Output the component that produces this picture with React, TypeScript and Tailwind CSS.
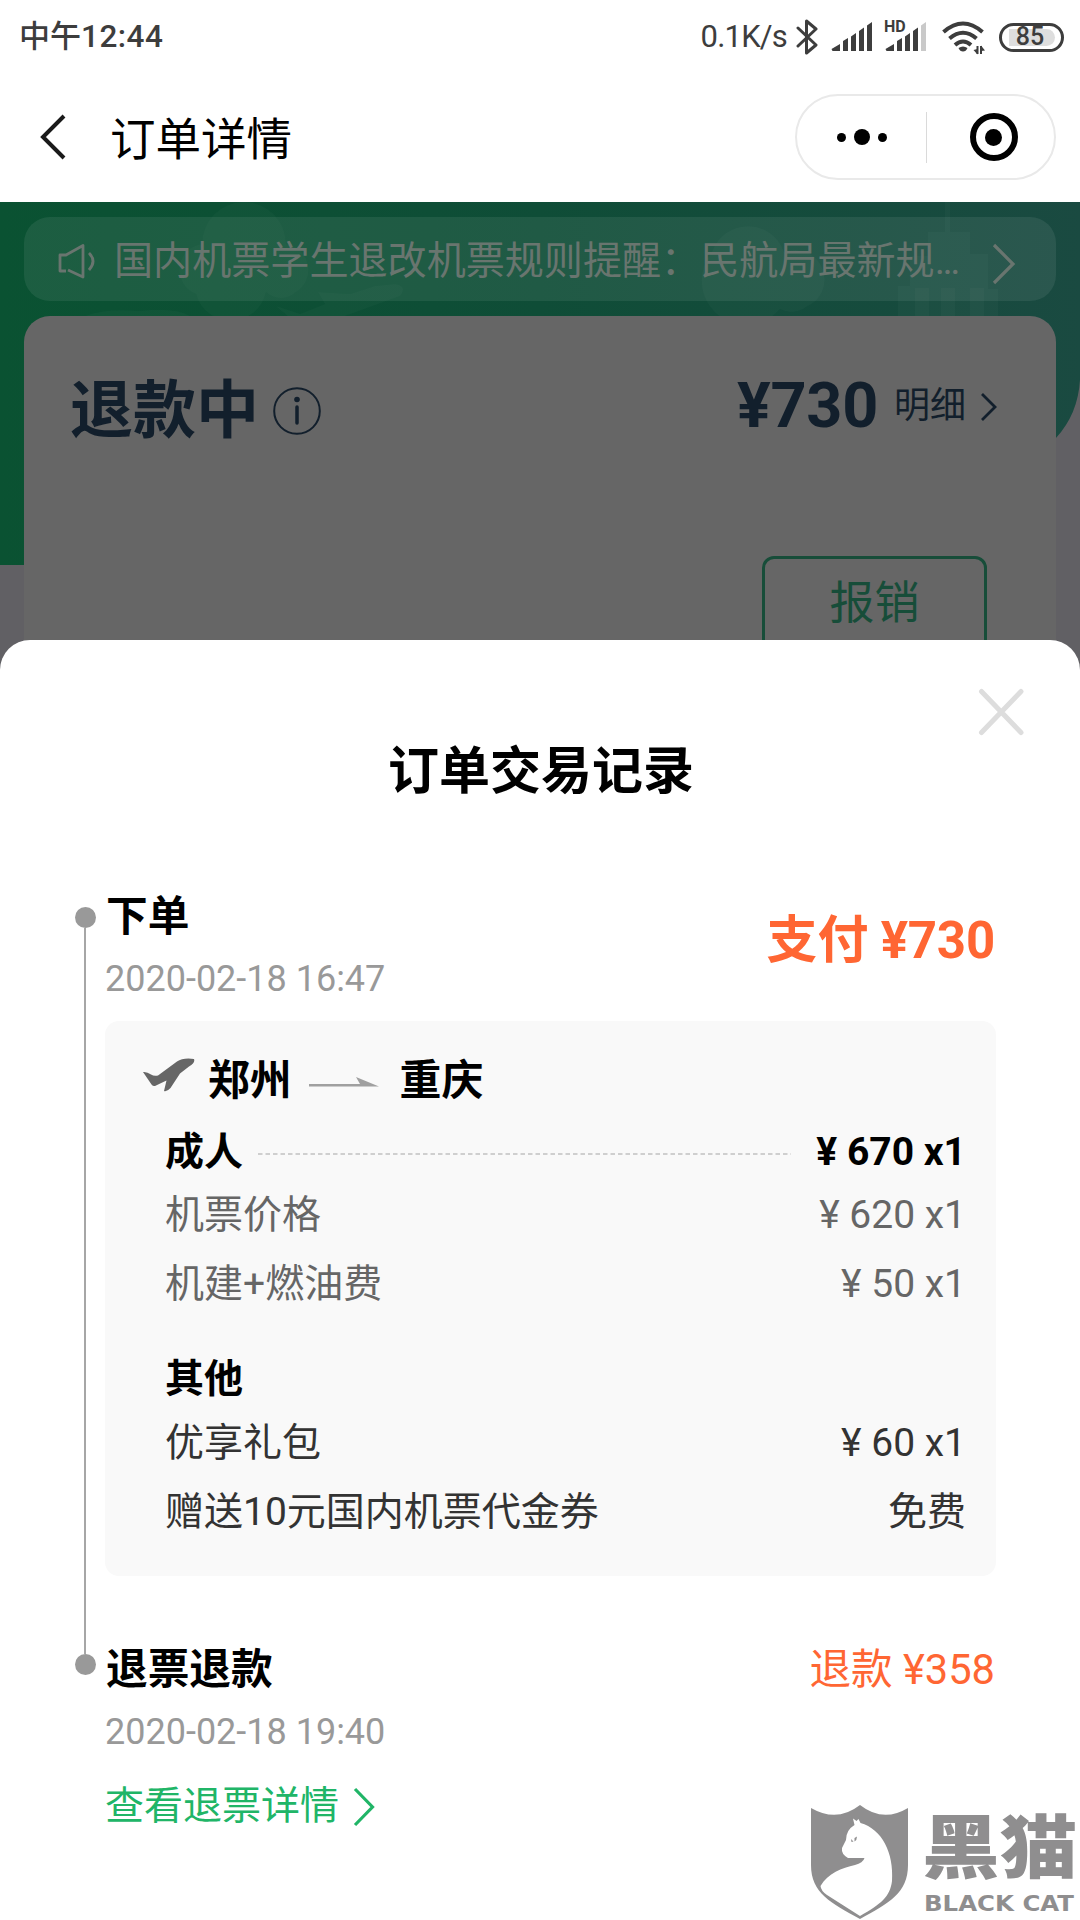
import React from "react";

const Bluetooth = () => (
  <svg width="22" height="36" viewBox="0 0 22 36" fill="none" stroke="#3d3d3d" strokeWidth="3" strokeLinejoin="round" strokeLinecap="round">
    <path d="M2 9 L20 26 L10.5 34 V2 L20 10 L2 27" />
  </svg>
);

const Signal = ({ weak = false }: { weak?: boolean }) => (
  <svg width="42" height="32" viewBox="0 0 42 32" fill="#3d3d3d">
    <path d="M0.500 28 L9 23 V30 H1.500Z M12 20 L17 17 V30 H12Z M20 15.500 L25 12 V30 H20Z M28 10 L33 6.500 V30 H28Z" />
    <path d="M36 4.500 L41 1 V30 H36Z" fill={weak ? "#c9c9c9" : "#3d3d3d"} />
  </svg>
);

const Wifi = () => (
  <svg width="44" height="34" viewBox="0 0 44 34" fill="none" stroke="#3d3d3d" strokeWidth="4">
    <path d="M1.500 11 Q21 -6 40.500 11 M7.500 17.500 Q21 6 34.500 17.500 M13 24 Q21 17 29 24" />
    <path d="M16.500 27 Q21 24 25.500 27 Q24 30.500 21 30.500 Q18 30.500 16.500 27Z" fill="#3d3d3d" stroke="none" />
    <path d="M35.500 25 V33 M39 25 V33" strokeWidth="2" />
    <path d="M31.500 29 L35.500 33.500 V28Z M43 29.500 L39 24.500 V30Z" fill="#3d3d3d" stroke="none" />
  </svg>
);

const StatusBar = () => (
  <div className="flex h-[74px] items-center pl-[19px] pr-[16px] text-[#3d3d3d]">
    <div className="flex flex-1 items-center font-medium">
      <span className="text-[31px]">中午</span>
      <span className="text-[31.500px] tracking-[0.500px]">12:44</span>
    </div>
    <span className="text-[31px] tracking-[-0.800px]">0.1K/s</span>
    <span className="ml-[9px]"><Bluetooth /></span>
    <span className="ml-[13px]"><Signal /></span>
    <span className="relative ml-[12px]">
      <Signal weak />
      <span className="absolute left-[-1px] top-[-4px] text-[16px] font-bold leading-5">HD</span>
    </span>
    <span className="ml-[15px] pt-0.5"><Wifi /></span>
    <span className="ml-[13px] flex h-[29px] w-[65px] items-center justify-center rounded-full border-[3px] border-[#3d3d3d] p-[3px]">
      <span className="flex h-full w-[46px] items-center justify-center rounded-r-full bg-[#dedede] pr-[3px] text-[25px] font-medium">85</span>
    </span>
  </div>
);

const TitleBar = () => (
  <div className="flex h-[128px] items-center pb-[2px] pl-[40px] pr-[24px]">
    <svg width="28" height="48" viewBox="0 0 28 48" fill="none" stroke="#1a1a1a" strokeWidth="4">
      <path d="M24 3 L3 24 L24 45" />
    </svg>
    <h1 className="ml-[42px] mt-[8px] flex-1 text-[45.500px] leading-[60px] text-black">订单详情</h1>
    <div className="flex h-[86px] w-[261px] items-center rounded-full border-2 border-[#e9e9e9]">
      <div className="flex w-[129px] items-center justify-center gap-[8px]">
        <i className="h-[9px] w-[9px] rounded-full bg-black" />
        <i className="h-[16px] w-[16px] rounded-full bg-black" />
        <i className="h-[9px] w-[9px] rounded-full bg-black" />
      </div>
      <i className="h-[51px] w-px bg-[#dadada]" />
      <div className="flex flex-1 justify-center pl-[6px]">
        <div className="flex h-[48px] w-[48px] items-center justify-center rounded-full border-[6px] border-black">
          <i className="h-[17px] w-[17px] rounded-full bg-black" />
        </div>
      </div>
    </div>
  </div>
);

const Backdrop = () => (
  <svg className="absolute inset-0" width="1080" height="480" viewBox="0 0 1080 480">
    <defs>
      <linearGradient id="green" x1="0" y1="0" x2="1" y2="0">
        <stop offset="0" stopColor="#0a5232" />
        <stop offset="0.5" stopColor="#0f4d37" />
        <stop offset="1" stopColor="#1a4a41" />
      </linearGradient>
    </defs>
    <path d="M0 0 H1080 V178 Q1078 212 1056 236 L1000 290 H24 V363 H0Z" fill="url(#green)" />
    <g fill="#ffffff" fillOpacity="0.022">
      <path d="M196 92 a26 26 0 0 1 6 -50 a38 38 0 0 1 84 0 a26 26 0 0 1 10 48 a22 22 0 0 1 -30 0 a36 36 0 0 1 -70 2Z" />
      <path d="M276 104 L290 116 L345 114 L400 94 Q408 84 395 82 L375 84 L350 92 L318 90 L325 102 L300 112Z" />
      <path d="M85 114 Q105 106 140 109 Q175 105 190 114Z" />
      <path d="M712 50 a38 38 0 0 1 72 0 a24 24 0 0 1 22 55 a24 24 0 0 1 -26 2 a38 38 0 0 1 -68 -57Z" />
      <path d="M945 0 h5 v30 h20 v22 h18 v35 h10 v27 h-100 v-30 h12 v-30 h18 v-24 h17Z" />
      <path d="M915 86 h14 v28 h-14Z M941 86 h14 v28 h-14Z M970 86 h14 v28 h-14Z" />
    </g>
  </svg>
);

const Notice = () => (
  <div className="relative mx-[24px] flex h-[84px] items-center rounded-[26px] bg-white/[0.075] pl-[33px] pr-[40px] text-[#69756f]">
    <svg className="mt-[4px]" width="40" height="36" viewBox="0 0 40 36" fill="none" stroke="currentColor" strokeWidth="2.800" strokeLinejoin="round">
      <path d="M9 28 H3 V12 H9 L26 2.500 V34 L11 27" />
      <path d="M32 10 Q40 18 32 27" />
    </svg>
    <span className="ml-[17px] mt-[4px] flex-1 whitespace-nowrap text-[39.100px] leading-[56px]">
      国内机票学生退改机票规则提醒：民航局最新规<span className="tracking-[-2.500px]">...</span>
    </span>
    <svg className="mt-[9px]" width="24" height="42" viewBox="0 0 24 42" fill="none" stroke="currentColor" strokeWidth="3.200">
      <path d="M2 2 L21 21 L2 40" />
    </svg>
  </div>
);

const OrderCard = () => (
  <div className="relative mx-[24px] mt-[15px] h-[324px] overflow-hidden rounded-t-[26px] bg-[#666666] text-[#121f2c]">
    <div className="flex h-[184px] items-center pl-[46px] pr-[57px]">
      <span className="mt-[5px] text-[63px] font-bold leading-[80px]">退款中</span>
      <svg className="ml-[13px] mt-[6px]" width="50" height="50" viewBox="0 0 50 50" fill="none" stroke="currentColor">
        <circle cx="25" cy="25" r="22.800" strokeWidth="2" />
        <circle cx="25" cy="13.500" r="2.800" fill="currentColor" stroke="none" />
        <path d="M25 21 V37" strokeWidth="3.500" strokeLinecap="round" />
      </svg>
      <span className="-mt-[4px] ml-auto text-[63px] font-bold leading-[80px] tracking-[-0.300px]">¥730</span>
      <span className="-mt-[4px] ml-[16px] text-[36px]">明细</span>
      <svg className="-mt-[2px] ml-[13px]" width="20" height="32" viewBox="0 0 20 32" fill="none" stroke="currentColor" strokeWidth="2.800">
        <path d="M3 3 L16 16 L3 29" />
      </svg>
    </div>
    <div className="ml-auto mr-[69px] mt-[56px] h-[120px] w-[225px] rounded-[12px] border-[3px] border-[#174d39] pt-[15px] text-center text-[45px] leading-[60px] text-[#174d39]">
      报销
    </div>
  </div>
);

const Price = ({ label, value, tone }: { label: string; value: string; tone: string }) => (
  <div className={"flex items-center justify-between text-[39px] " + tone}>
    <span>{label}</span>
    <span>{value}</span>
  </div>
);

const Details = () => (
  <div className="-mr-px -mt-px h-[555px] rounded-[14px] bg-[#f9f9f9] pl-[60px] pr-[30px] pt-[33px]">
    <div className="-ml-[22px] flex h-[55px] items-center text-[41.800px] font-bold text-black">
      <svg className="-mt-[14px]" width="52" height="34" viewBox="0 0 52 34" fill="#666">
        <path d="M0 14 Q4 13.500 8 16.500 Q11 18.500 15 17.500 L34 3.500 Q40 -0.500 51 1 Q52.500 5 46 8.500 L37 15.500 L27.500 30 Q24 34 21 33 L23.500 22.500 L13 27.500 Q10.500 29 8.500 26.500Z" />
      </svg>
      <span className="ml-[13px]">郑州</span>
      <svg className="ml-[16px]" width="71" height="12" viewBox="0 0 71 12" fill="#a0a0a0">
        <path d="M1 8 H52 L48 1 L71 10.500 H1Z" />
      </svg>
      <span className="ml-[21px]">重庆</span>
    </div>
    <div className="mt-[15px] flex h-[57px] items-center text-[39px] font-bold text-black">
      <span>成人</span>
      <svg className="ml-[15px] mt-[3px]" width="533" height="2">
        <path d="M0 1 H533" stroke="#cfcfcf" strokeWidth="2" strokeDasharray="4.500 3" />
      </svg>
      <span className="ml-auto">¥ 670 x1</span>
    </div>
    <Price label="机票价格" value="¥ 620 x1" tone="h-[69px] text-[#666666]" />
    <Price label="机建+燃油费" value="¥ 50 x1" tone="h-[69px] text-[#666666]" />
    <div className="mt-[32px] flex h-[57px] items-center text-[39px] font-bold text-black">其他</div>
    <Price label="优享礼包" value="¥ 60 x1" tone="h-[70px] text-[#333333]" />
    <Price label="赠送10元国内机票代金券" value="免费" tone="h-[69px] text-[#333333]" />
  </div>
);

const Watermark = () => (
  <div className="absolute bottom-0 right-0 flex h-[120px] w-[270px] text-[#8f8e8f]">
    <svg className="ml-px mt-[5px]" width="98" height="114" viewBox="0 0 98 114">
      <path d="M0 3 Q26 18 49 0 Q72 18 97 3 V60 C97 88 78 98 49 114 C20 98 0 88 0 60Z" fill="currentColor" />
      <path d="M42 13.500 L45.500 16 L47.500 14 L49.500 18 C71 24 83 48 81 76 C79 92 70 99 49 111 L16 90 Q10 86 9.500 81 C17 68 31 63 44 60 Q52 58 53.500 53 L37 53 Q30 49 31 43 L35 35 Q35 25 43.500 20Z" fill="#fff" />
      <path d="M40 34 L42.500 36.500 L40.500 37Z M43.500 33 L46 31.500 Q46 35 43.500 36.500 Z" fill="currentColor" />
    </svg>
    <div className="ml-[13px] flex w-[156px] flex-col">
      <span className="mt-[10px] h-[80px] w-[148px] origin-left scale-x-[1.050] scale-y-[0.930] whitespace-nowrap text-[74px] font-black leading-[80px]">黑猫</span>
      <span className="ml-[2px] mt-[2px] w-[138px] origin-left scale-x-[1.110] whitespace-nowrap font-['DejaVu_Sans'] text-[22px] font-bold leading-[24px]">BLACK CAT</span>
    </div>
  </div>
);

const Sheet = () => (
  <section className="absolute inset-x-0 bottom-0 h-[1280px] rounded-t-[30px] bg-white pt-[102px]">
    <svg className="absolute left-[977px] top-[47px]" width="48" height="50" viewBox="0 0 48 50" stroke="#dddddd" strokeWidth="5" strokeLinecap="round">
      <path d="M4.500 4.500 L44 45.500 M44 4.500 L4.500 45.500" />
    </svg>
    <h2 className="pl-[2px] text-center text-[51px] font-bold leading-[60px] text-black">订单交易记录</h2>
    <div className="mt-[83px] flex pl-[75px] pr-[85px]">
      <div className="flex w-[21px] flex-col items-center pt-[22px]">
        <i className="h-[21px] w-[21px] rounded-full bg-[#999999]" />
        <i className="mr-[2px] h-[726px] w-[2px] bg-[#a6a6a6]" />
        <i className="h-[21px] w-[21px] rounded-full bg-[#999999]" />
      </div>
      <div className="ml-[9px] flex-1">
        <div className="flex h-[137px] justify-between pt-px">
          <div>
            <div className="pl-px text-[41.700px] font-bold leading-[62px] text-black">下单</div>
            <div className="text-[36px] leading-[62px] text-[#999999]">2020-02-18 16:47</div>
          </div>
          <div className="text-[51px] font-bold leading-[110px] tracking-[-0.200px] text-[#ff6633]">支付 ¥730</div>
        </div>
        <Details />
        <div className="mt-[63px] flex justify-between leading-[62px]">
          <div>
            <div className="pl-px text-[41.700px] font-bold text-black">退票退款</div>
            <div className="text-[36px] text-[#999999]">2020-02-18 19:40</div>
            <div className="flex h-[86px] items-center text-[39px] text-[#20b567]">
              查看退票详情
              <svg className="ml-[13px] mt-[1px]" width="24" height="40" viewBox="0 0 24 40" fill="none" stroke="currentColor" strokeWidth="3.200">
                <path d="M3 2 L20.500 20 L3 38" />
              </svg>
            </div>
          </div>
          <div className="text-[41.600px] text-[#ff6633]">退款 ¥358</div>
        </div>
      </div>
    </div>
    <Watermark />
  </section>
);

export default function App() {
  return (
    <main className="relative h-[1920px] w-[1080px] overflow-hidden bg-white font-['Roboto','Noto_Sans_CJK_SC',sans-serif]">
      <StatusBar />
      <TitleBar />
      <div className="relative h-[1718px] bg-[#616064] pt-[15px]">
        <Backdrop />
        <Notice />
        <OrderCard />
      </div>
      <Sheet />
    </main>
  );
}
